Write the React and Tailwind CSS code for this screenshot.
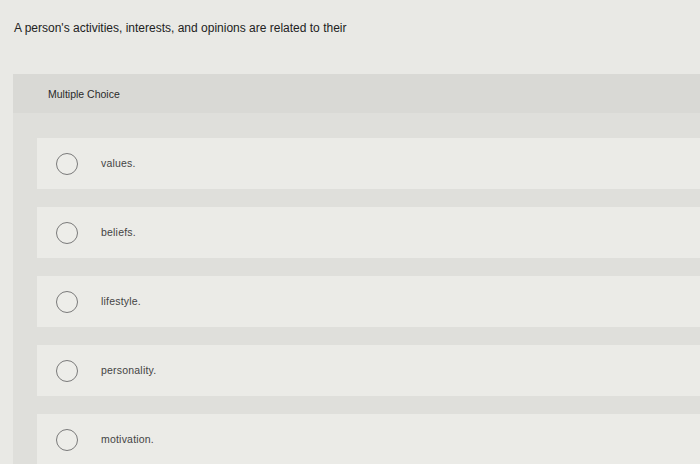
export default function App() {
  const options = ["values.", "beliefs.", "lifestyle.", "personality.", "motivation."];

  return (
    <div className="w-[700px] h-[464px] overflow-hidden bg-[#e9e9e5] font-['Liberation_Sans',Arial,sans-serif]">
      {/* Question */}
      <p className="pt-[20px] pl-[14px] text-[12px] leading-[16px] text-[#222]">
        A person's activities, interests, and opinions are related to their
      </p>

      {/* Answer panel */}
      <div className="mt-[38px] ml-[13px] bg-[#dfdfdb]">
        <div className="h-[39px] pl-[35px] pt-[2px] flex items-center bg-[#d9d9d5] text-[10.5px] text-[#2a2a2a]">
          Multiple Choice
        </div>

        <div className="pt-[25px] pl-[24px] flex flex-col gap-[18px]">
          {options.map((opt) => (
            <div
              key={opt}
              className="h-[51px] flex items-center bg-[#ebebe7]"
            >
              <span className="ml-[19px] w-[22px] h-[22px] rounded-full border-[1.5px] border-[#7a7a7a] bg-[#ededE9] shrink-0" />
              <span className="ml-[23px] text-[10.5px] tracking-[0.2px] text-[#444]">
                {opt}
              </span>
            </div>
          ))}
        </div>
      </div>
    </div>
  );
}
